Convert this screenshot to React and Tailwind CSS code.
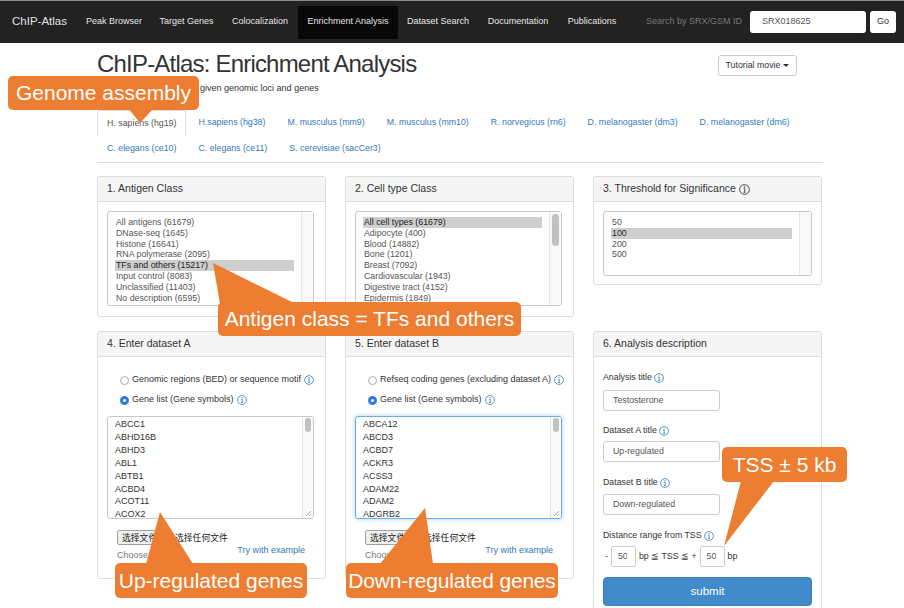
import React from "react";

const Info = ({ color = "#337ab7", size = 10 }) => (
  <svg width={size} height={size} viewBox="0 0 10 10" className="inline-block shrink-0">
    <circle cx="5" cy="5" r="4.4" fill="none" stroke={color} strokeWidth="0.8" />
    <circle cx="5" cy="2.8" r="0.65" fill={color} />
    <path d="M4.2 4.3H5.2V7.5M4.1 7.5H5.9" fill="none" stroke={color} strokeWidth="0.8" />
  </svg>
);

const Radio = ({ checked }) =>
  checked ? (
    <svg width="9" height="9" viewBox="0 0 9 9" className="shrink-0">
      <circle cx="4.5" cy="4.5" r="4.2" fill="#2c7be5" stroke="#1f66c9" strokeWidth="0.5" />
      <circle cx="4.5" cy="4.5" r="1.5" fill="#fff" />
    </svg>
  ) : (
    <svg width="9" height="9" viewBox="0 0 9 9" className="shrink-0">
      <circle cx="4.5" cy="4.5" r="4" fill="#fff" stroke="#8a8a8a" strokeWidth="0.7" />
    </svg>
  );

function Panel({ title, children, bodyClass }) {
  return (
    <div className="border border-[#ddd] rounded-[3px] bg-white">
      <div className="h-[25px] bg-[#f5f5f5] border-b border-[#ddd] rounded-t-[3px] px-[9px] flex items-center gap-[3px] text-[10.5px] text-[#333]">
        {title}
      </div>
      <div className={bodyClass}>{children}</div>
    </div>
  );
}

function ListBox({ items, selected, heightClass, thumb }) {
  return (
    <div className={"flex border border-[#c8c8c8] rounded-[3px] overflow-hidden " + heightClass}>
      <div className="flex-1 pl-[7px] pr-[7px] pt-[5px] text-[8.8px] leading-[10.8px] text-[#555] overflow-hidden">
        {items.map((it, i) => (
          <div
            key={i}
            className={
              i === selected
                ? "px-[1px] bg-[#cecece] text-[#222] whitespace-nowrap"
                : "px-[1px] whitespace-nowrap"
            }
          >
            {it}
          </div>
        ))}
      </div>
      <div className="w-[12px] bg-[#f9f9f9] border-l border-[#e6e6e6] flex justify-center">
        {thumb && <div className="mt-[2px] w-[7px] h-[32px] rounded-full bg-[#c1c1c1]" />}
      </div>
    </div>
  );
}

function TextArea({ items, focus }) {
  return (
    <div
      className={
        focus
          ? "mt-[9px] h-[103px] border border-[#66afe9] rounded-[3px] shadow-[0_0_4px_rgba(102,175,233,0.6)] flex overflow-hidden relative bg-white"
          : "mt-[9px] h-[103px] border border-[#c8c8c8] rounded-[3px] flex overflow-hidden relative bg-white"
      }
    >
      <div className="flex-1 pl-[7px] pt-[1px] text-[9px] leading-[12.9px] text-[#333] overflow-hidden">
        {items.map((it, i) => (
          <div key={i}>{it}</div>
        ))}
      </div>
      <div className="w-[11px] border-l border-[#e6e6e6] bg-[#fafafa] flex justify-center">
        <div className="mt-[1px] w-[6px] h-[14px] rounded-full bg-[#c1c1c1]" />
      </div>
      <svg width="8" height="8" viewBox="0 0 8 8" className="absolute right-[1px] bottom-[1px]">
        <path d="M7 2L2 7M7 5L5 7" stroke="#888" strokeWidth="0.7" />
      </svg>
    </div>
  );
}

function DatasetPanel({ title, opt1, items, focus }) {
  return (
    <Panel title={title} bodyClass="pl-[9px] pr-[11px] pt-[16px] pb-[16px]">
      <div className="ml-[13px] h-[14px] flex items-center gap-[3px] text-[9px] text-[#333] whitespace-nowrap">
        <Radio />
        <span>{opt1}</span>
        <Info />
      </div>
      <div className="mt-[6px] ml-[13px] h-[14px] flex items-center gap-[3px] text-[9px] text-[#333] whitespace-nowrap">
        <Radio checked />
        <span>Gene list (Gene symbols)</span>
        <Info />
      </div>
      <TextArea items={items} focus={focus} />
      <div className="mt-[11px] h-[15px] flex items-center font-['Noto_Sans_CJK_SC',sans-serif] text-[8.8px] text-[#222] whitespace-nowrap">
        <div className="h-[15px] ml-[10px] px-[4px] border border-[#a0a0a0] rounded-[2px] bg-[#efefef] flex items-center">
          选择文件
        </div>
        <span className="ml-[4px]">未选择任何文件</span>
      </div>
      <div className="h-[17px] flex justify-between items-start text-[9px] leading-[11px] whitespace-nowrap">
        <span className="ml-[10px] mt-[5px] text-[#777]">Choose a file</span>
        <span className="mr-[9px] text-[#337ab7]">Try with example</span>
      </div>
    </Panel>
  );
}

const Label = ({ children, cls }) => (
  <div className={"h-[12px] flex items-center gap-[2px] text-[8.8px] text-[#333] whitespace-nowrap " + cls}>
    <span>{children}</span>
    <Info />
  </div>
);

const TextInput = ({ children, cls }) => (
  <div
    className={
      "w-[117px] h-[21px] border border-[#ccc] rounded-[3px] pl-[9px] flex items-center text-[8.8px] text-[#555] " + cls
    }
  >
    {children}
  </div>
);

const SmallInput = () => (
  <div className="w-[25px] h-[21px] border border-[#ccc] rounded-[2px] pl-[6px] flex items-center text-[8.8px] text-[#555]">
    <div className="overflow-hidden whitespace-nowrap w-[9px]">5000</div>
  </div>
);

const tabs1 = [
  "H. sapiens (hg19)",
  "H.sapiens (hg38)",
  "M. musculus (mm9)",
  "M. musculus (mm10)",
  "R. norvegicus (rn6)",
  "D. melanogaster (dm3)",
  "D. melanogaster (dm6)",
  "C. elegans (ce10)",
  "C. elegans (ce11)",
  "S. cerevisiae (sacCer3)",
];

export default function App() {
  const orange = "#ed7d31";
  return (
    <div className="relative w-[904px] h-[608px] overflow-hidden bg-white font-['Liberation_Sans',Arial,sans-serif]">
      {/* navbar */}
      <div className="h-[43px] bg-[#222] border-t border-[#8c8c8c] flex items-center text-[9px] text-[#e6e6e6] whitespace-nowrap">
        <div className="w-[77px] pl-[12px] text-[11.5px] text-[#e0e0e0]">ChIP-Atlas</div>
        <div className="w-[74px] text-center">Peak Browser</div>
        <div className="w-[71px] text-center">Target Genes</div>
        <div className="w-[76px] text-center">Colocalization</div>
        <div className="w-[100px] h-[33px] bg-[#080808] flex items-center justify-center">Enrichment Analysis</div>
        <div className="w-[80px] text-center">Dataset Search</div>
        <div className="w-[80px] text-center">Documentation</div>
        <div className="w-[68px] text-center">Publications</div>
        <div className="ml-[20px] w-[104px] text-[#777]">Search by SRX/GSM ID</div>
        <div className="w-[116px] h-[22px] bg-white rounded-[3px] pl-[12px] flex items-center text-[#555]">SRX018625</div>
        <div className="ml-[4px] w-[26px] h-[22px] bg-white rounded-[3px] flex items-center justify-center text-[#333]">Go</div>
      </div>

      {/* container */}
      <div className="ml-[97px] w-[726px]">
        <div className="mt-[6px] flex justify-between items-start">
          <h1 className="h-[30px] leading-[30px] text-[24px] tracking-[-0.8px] text-[#333] whitespace-nowrap">
            ChIP-Atlas: Enrichment Analysis
          </h1>
          <div className="mt-[6px] mr-[26px] w-[79px] h-[21px] border border-[#ccc] rounded-[3px] flex items-center justify-center gap-[3px] text-[8.8px] text-[#333]">
            <span>Tutorial movie</span>
            <span className="w-0 h-0 border-x-[3px] border-t-[3px] border-x-transparent border-t-[#333]" />
          </div>
        </div>
        <div className="mt-[3px] h-[12px] leading-[12px] text-[9px] text-[#333] whitespace-nowrap">
          Search proteins bound to given genomic loci and genes
        </div>

        {/* tabs */}
        <div className="mt-[16px] flex flex-wrap border-b border-[#ddd]">
          {tabs1.map((t, i) => (
            <div
              key={i}
              className={
                i === 0
                  ? "mr-[2px] h-[26px] px-[9px] flex items-center text-[8.8px] whitespace-nowrap border border-[#ddd] border-b-0 rounded-t-[3px] bg-white text-[#555]"
                  : "mr-[2px] h-[26px] px-[9px] flex items-center text-[8.8px] whitespace-nowrap border border-transparent text-[#337ab7]"
              }
            >
              {t}
            </div>
          ))}
        </div>

        {/* panels */}
        <div className="mt-[13px] grid grid-cols-[229px_229px_229px] gap-x-[19px] gap-y-[14px] items-start">
          <Panel title="1. Antigen Class" bodyClass="pl-[9px] pr-[11px] pt-[9px] pb-[10px]">
            <ListBox
              heightClass="h-[95px]"
              selected={4}
              items={[
                "All antigens (61679)",
                "DNase-seq (1645)",
                "Histone (16641)",
                "RNA polymerase (2095)",
                "TFs and others (15217)",
                "Input control (8083)",
                "Unclassified (11403)",
                "No description (6595)",
              ]}
            />
          </Panel>
          <Panel title="2. Cell type Class" bodyClass="pl-[9px] pr-[11px] pt-[9px] pb-[10px]">
            <ListBox
              heightClass="h-[95px]"
              selected={0}
              thumb
              items={[
                "All cell types (61679)",
                "Adipocyte (400)",
                "Blood (14882)",
                "Bone (1201)",
                "Breast (7092)",
                "Cardiovascular (1943)",
                "Digestive tract (4152)",
                "Epidermis (1849)",
                "Gonad (1022)",
              ]}
            />
          </Panel>
          <Panel
            title={
              <>
                <span>3. Threshold for Significance</span>
                <Info color="#333" size={11} />
              </>
            }
            bodyClass="px-[9px] pt-[9px] pb-[8px]"
          >
            <ListBox heightClass="h-[65px]" selected={1} items={["50", "100", "200", "500"]} />
          </Panel>

          <DatasetPanel
            title="4. Enter dataset A"
            opt1="Genomic regions (BED) or sequence motif"
            items={["ABCC1", "ABHD16B", "ABHD3", "ABL1", "ABTB1", "ACBD4", "ACOT11", "ACOX2", "ACSL1"]}
          />
          <DatasetPanel
            title="5. Enter dataset B"
            opt1="Refseq coding genes (excluding dataset A)"
            focus
            items={["ABCA12", "ABCD3", "ACBD7", "ACKR3", "ACSS3", "ADAM22", "ADAM2", "ADGRB2", "ADH1B"]}
          />
          <Panel title="6. Analysis description" bodyClass="px-[9px] pt-[15px] pb-[20px]">
            <Label cls="">Analysis title</Label>
            <TextInput cls="mt-[6px]">Testosterone</TextInput>
            <Label cls="mt-[14px]">Dataset A title</Label>
            <TextInput cls="mt-[4px]">Up-regulated</TextInput>
            <Label cls="mt-[15px]">Dataset B title</Label>
            <TextInput cls="mt-[5px]">Down-regulated</TextInput>
            <Label cls="mt-[15px]">Distance range from TSS</Label>
            <div className="mt-[4px] h-[21px] flex items-center gap-[3px] text-[8.8px] text-[#333] whitespace-nowrap">
              <span className="ml-[2px]">-</span>
              <SmallInput />
              <span>bp ≦ TSS ≦ +</span>
              <SmallInput />
              <span>bp</span>
            </div>
            <div className="mt-[10px] h-[29px] rounded-[4px] bg-[#428bca] border border-[#3a7fbd] flex items-center justify-center text-[11.5px] text-white">
              submit
            </div>
          </Panel>
        </div>
      </div>

      {/* callouts */}
      <svg className="absolute left-0 top-0 pointer-events-none" width="904" height="608" viewBox="0 0 904 608">
        <polygon points="128,108 154,108 140,123" fill={orange} />
        <polygon points="213,263 220,304 296,304" fill={orange} />
        <polygon points="724,546 741,481 774,481" fill={orange} />
        <polygon points="160,512 146,564 193,564" fill={orange} />
        <polygon points="425,508 380,564 433,564" fill={orange} />
      </svg>
      <div className="absolute left-[8px] top-[76px] w-[191px] h-[34px] rounded-[5px] bg-[#ed7d31] flex items-center justify-center text-[21px] text-white whitespace-nowrap">
        Genome assembly
      </div>
      <div className="absolute left-[218px] top-[302px] w-[303px] h-[34px] rounded-[5px] bg-[#ed7d31] flex items-center justify-center text-[21px] text-white whitespace-nowrap">
        Antigen class = TFs and others
      </div>
      <div className="absolute left-[722px] top-[447px] w-[125px] h-[35px] rounded-[5px] bg-[#ed7d31] flex items-center justify-center text-[21px] text-white whitespace-nowrap">
        TSS ± 5 kb
      </div>
      <div className="absolute left-[115px] top-[563px] w-[192px] h-[35px] rounded-[5px] bg-[#ed7d31] flex items-center justify-center text-[21px] text-white whitespace-nowrap">
        Up-regulated genes
      </div>
      <div className="absolute left-[346px] top-[563px] w-[212px] h-[35px] rounded-[5px] bg-[#ed7d31] flex items-center justify-center text-[21px] tracking-[-0.2px] text-white whitespace-nowrap">
        Down-regulated genes
      </div>
    </div>
  );
}
